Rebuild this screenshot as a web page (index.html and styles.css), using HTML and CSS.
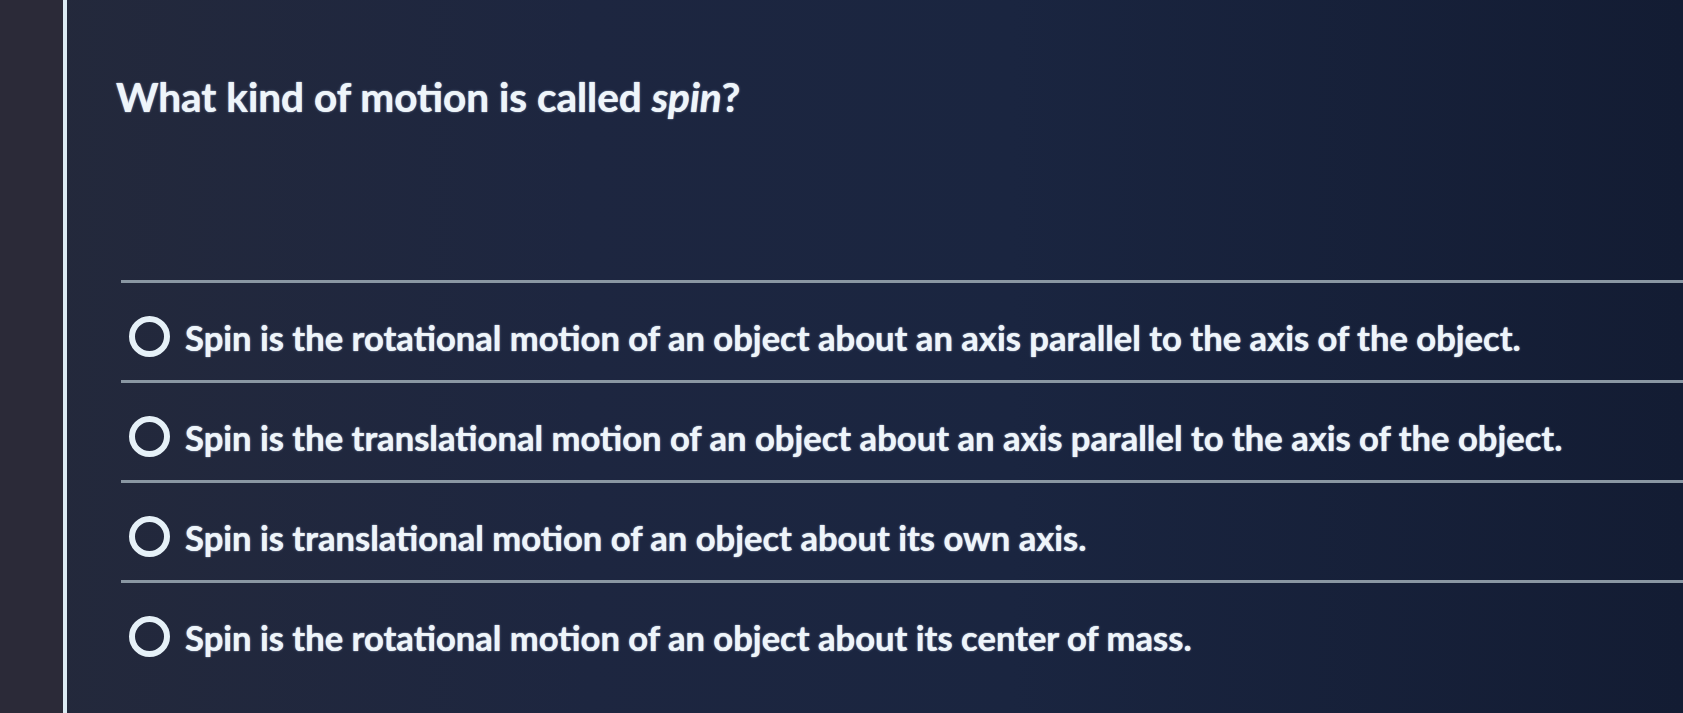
FILE: index.html
```html
<!DOCTYPE html>
<html lang="en">
<head>
<meta charset="utf-8">
<title>Quiz question</title>
<link rel="stylesheet" href="styles.css">
</head>
<body>
<div class="page">
  <aside class="sidebar"></aside>
  <main class="main">
    <h1 class="title">What kind of motion is called <em>spin</em>?</h1>
    <ul class="options">
      <li class="option"><span class="radio"></span><span class="label">Spin is the rotational motion of an object about an axis parallel to the axis of the object.</span></li>
      <li class="option"><span class="radio"></span><span class="label">Spin is the translational motion of an object about an axis parallel to the axis of the object.</span></li>
      <li class="option"><span class="radio"></span><span class="label">Spin is translational motion of an object about its own axis.</span></li>
      <li class="option"><span class="radio"></span><span class="label">Spin is the rotational motion of an object about its center of mass.</span></li>
    </ul>
  </main>
</div>
</body>
</html>
```
FILE: styles.css
```css
html, body {
  margin: 0;
  padding: 0;
  background: #1a2236;
}
.page {
  display: flex;
  height: 713px;
  overflow: hidden;
  background: linear-gradient(90deg, #24293b 0%, #1d2640 35%, #1a2540 60%, #131c33 100%);
  font-family: Lato, "Open Sans", sans-serif;
  color: #eef5fa;
}
.sidebar {
  width: 63px;
  flex: none;
  background: #2b2a38;
  border-right: 4px solid #dcebf3;
}
.main {
  flex: 1;
  padding: 74px 0 0 49px;
}
.title {
  margin: 0;
  font-size: 40.5px;
  line-height: 46px;
  font-weight: 700;
  text-shadow: 0 0 1px #eef5fa, 0 0 3px rgba(190, 215, 255, 0.35);
}
.title em {
  font-style: italic;
}
.options {
  list-style: none;
  margin: 160px 0 0 5px;
  padding: 0;
}
.option {
  box-sizing: border-box;
  height: 100px;
  border-top: 3px solid #8a97a3;
  padding: 12px 0 0 8px;
  display: flex;
  align-items: center;
}
.option .radio {
  flex: none;
  box-sizing: border-box;
  width: 41px;
  height: 41px;
  border: 6px solid #e6f1f8;
  border-radius: 50%;
  margin-right: 15px;
  margin-top: -2px;
}
.option .label {
  font-size: 34.6px;
  font-weight: 700;
  line-height: 42px;
  white-space: nowrap;
  text-shadow: 0 0 1px #eef5fa, 0 0 3px rgba(190, 215, 255, 0.35);
}
```
